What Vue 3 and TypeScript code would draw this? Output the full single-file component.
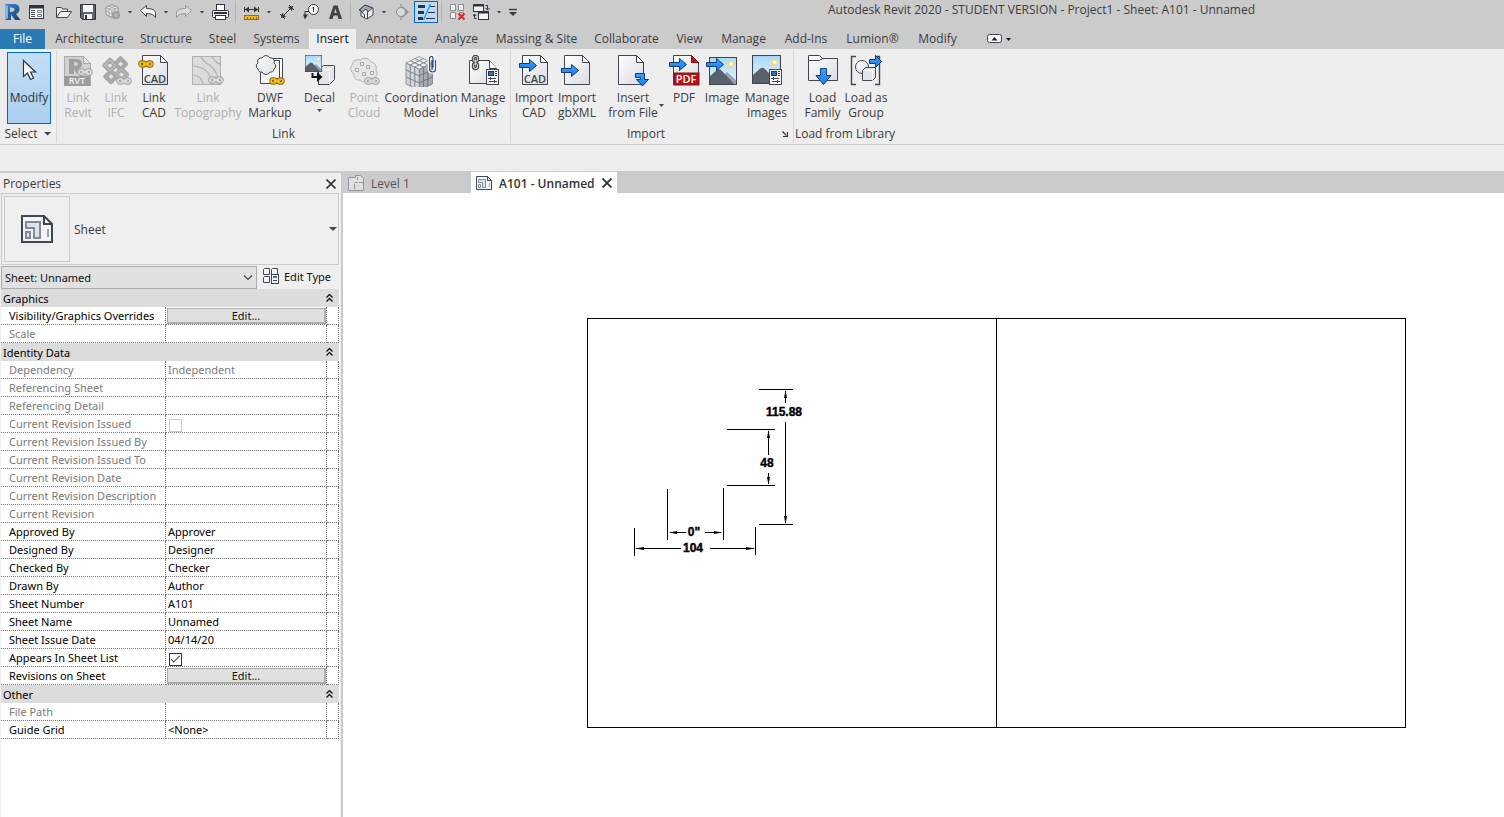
<script setup lang="ts">
import { ref } from 'vue'

/* ---------- shared drawing helpers ---------- */
const INK = '#3f4652'

const chain = (x: number, y: number, fill: string, line: string): string =>
  `<g fill="none"><g stroke="${line}" stroke-width="3.4"><rect x="${x + 2}" y="${y + 2}" width="5" height="4" rx="2"/><rect x="${x + 9}" y="${y + 2}" width="5" height="4" rx="2"/><path d="M${x + 5} ${y + 4}h6"/></g>` +
  `<g stroke="${fill}" stroke-width="1.6"><rect x="${x + 2}" y="${y + 2}" width="5" height="4" rx="2"/><rect x="${x + 9}" y="${y + 2}" width="5" height="4" rx="2"/><path d="M${x + 5} ${y + 4}h6"/></g></g>`
const gold = (x: number, y: number) => chain(x, y, '#fcc21b', '#8a5f08')
const dim = (x: number, y: number) => chain(x, y, '#dedede', '#a2a2a2')

const paper = (x: number): string =>
  `<path d="M${x}.5 .5h18l7 7v22h-25z" fill="url(#paper)" stroke="${INK}"/><path d="M${x + 18}.5 .5v7h7z" fill="#fff" stroke="${INK}" stroke-linejoin="round"/>`
const arrowRight = (x: number, y: number): string =>
  `<path d="M${x}.5 ${y + 4}.5h10v-4l7 6-7 6v-4h-10z" fill="url(#blue)" stroke="#0d3c78"/>`
const panelDoc = (x: number, y: number): string =>
  `<rect x="${x}.5" y="${y}.5" width="12" height="15" fill="#f4f4f4" stroke="${INK}"/><rect x="${x + 2}.5" y="${y + 2}.5" width="5" height="4" fill="#3b6fb2" stroke="#26384f"/><path d="M${x + 9} ${y + 2}.5h2M${x + 9} ${y + 4}.5h2M${x + 9} ${y + 6}.5h2M${x + 2} ${y + 9}.5h8M${x + 3} ${y + 12}.5h8" stroke="${INK}" fill="none"/><path d="M${x + 4}.5 ${y + 8}v3M${x + 8}.5 ${y + 11}v3" stroke="${INK}"/>`
const photo = (x: number, y: number, s: number): string =>
  `<svg x="${x}" y="${y}" width="${s}" height="${s}" viewBox="0 0 28 28"><rect x=".5" y=".5" width="27" height="27" fill="url(#sky)"/><path d="M13 20l5-5 10 9v4H10z" fill="#9aa1ab"/><path d="M0 20l8-7q3-2 5 1l13 14H0z" fill="#59616d"/><circle cx="22" cy="7" r="2.6" fill="#fff" stroke="#f5d878" stroke-width="1.6"/><rect x=".5" y=".5" width="27" height="27" fill="none" stroke="${INK}"/></svg>`
const word = (x: number, y: number, size: number, fill: string, t: string): string =>
  `<text x="${x}" y="${y}" font-size="${size}" fill="${fill}" text-anchor="middle" font-weight="600" font-family="Open Sans, Noto Sans, sans-serif">${t}</text>`

const cubes = ((): string => {
  let out = ''
  for (let r = 0; r < 3; r++)
    for (let c = 0; c < 3; c++) {
      const lx = 1 + c * 4.4
      const ly = 8 + r * 7 + c * 2
      out += `<path d="M${lx} ${ly}l4.4 2v7l-4.400-2z" fill="#d3d6da" stroke="#7c828b" stroke-width=".8"/>`
      const rx = 14.2 + c * 4.4
      const ry = 14 + r * 7 - c * 2
      out += `<path d="M${rx} ${ry}l4.400-2v7l-4.400 2z" fill="#a9aeb5" stroke="#6b717b" stroke-width=".8"/>`
    }
  for (let r = 0; r < 3; r++)
    for (let c = 0; c < 3; c++) {
      const tx = 14.2 + (c - r) * 4.4
      const ty = 1.6 + (c + r) * 2.1
      out += `<path d="M${tx} ${ty}l4.400 2.100-4.400 2.100-4.400-2.100z" fill="#f1f2f4" stroke="#7c828b" stroke-width=".8"/>`
    }
  return out
})()

/* ---------- 32px ribbon icons ---------- */
const big: Record<string, string> = {
  cursor: `<path d="M10.500 5.500v16l4-3.500 3 6.500 3-1.500-3-6h5z" fill="#fff" stroke="#2e3440" stroke-width="1.200"/>`,
  revit: `<path d="M2.500 1.500h19l7 7v22h-26z" fill="#d2d2d2" stroke="#aaa"/><path d="M21.500 1.500v7h7z" fill="#eee" stroke="#aaa"/><path d="M7 4h7q6 0 6 5 0 4-4 5l4 5h-5l-3-5v5H7zM12 7v4q4 0 4-2t-4-2z" fill="#9f9f9f"/><rect x="2" y="21" width="26" height="10" fill="#9c9c9c"/>${word(15, 29, 9, '#f2f2f2', 'RVT')}${dim(15, 13)}`,
  ifc: `<g fill="#e6e6e6" stroke="#a9a9a9" stroke-width="4.500" stroke-linejoin="round"><path d="M10 5l5.500 5.500L10 16l-5.500-5.500zM20.500 3.500L26 9l-5.500 5.500L15 9zM11 16l5.500 5.500L11 27l-5.500-5.500zM21.500 14l5.500 5.500-5.500 5.500-5.500-5.500z"/></g><g fill="none" stroke="#c6c6c6" stroke-linejoin="round"><path d="M10 5l5.500 5.500L10 16l-5.500-5.500zM21.500 14l5.500 5.500-5.500 5.500-5.500-5.500z"/></g>${dim(16, 22)}`,
  linkcad: `${paper(4)}${word(17, 28, 11, INK, 'CAD')}${gold(0, 5)}`,
  topo: `<rect x=".5" y="1.500" width="28" height="28" fill="#dcdcdc" stroke="#b0b0b0"/><path d="M1 20q9 1 10 9.500M1 11q17 1 19 18M9 1.500q3 6 9 9 8 6 9 19M20 1.500q2 5 8.500 8" fill="none" stroke="#b0b0b0" stroke-width="1.200"/>${dim(16, 21)}`,
  dwf: `<path d="M10.500 3.500h18v23h-18z" fill="#fff" stroke="${INK}"/><path d="M6.500 5.500h19v23h-19z" fill="#f4f4f4" stroke="${INK}"/><path d="M4 14a3.500 3.500 0 0 1 0-6a3.500 3.500 0 0 1 4-5a4.500 4.500 0 0 1 8 0a3.500 3.500 0 0 1 4 5a3.500 3.500 0 0 1 0 6a3.500 3.500 0 0 1-4 3a4.500 4.500 0 0 1-8 0a3.500 3.500 0 0 1-4-3z" fill="url(#paper)" stroke="${INK}"/>${gold(15, 22)}`,
  decal: `<path d="M14.500 14.500l5-4h11v14l-5 5h-11z" fill="#e3e5e8" stroke="${INK}"/><path d="M15 14.500h10.500v15M25.500 14.500l5-4" fill="none" stroke="#fff"/>${photo(1, 0, 17)}<path d="M8.500 18v4h6" fill="none" stroke="#111" stroke-width="2"/><path d="M13 17v10l5.500-5z" fill="#111"/>`,
  cloud: `<path d="M6 19a6 6 0 0 1-2-9a6 6 0 0 1 8-5a7 7 0 0 1 11 2a6 6 0 0 1 5 8a5 5 0 0 1-2 8a6 6 0 0 1-8 4a6 6 0 0 1-6-2a5 5 0 0 1-6-6z" fill="#e6e6e6" stroke="#b2b2b2"/><g fill="#eee" stroke="#a9a9a9"><path d="M12.500 7.500h3v3h-3zM18.500 10.500h3v3h-3zM7.500 13.500h3v3h-3zM14.500 17.500h3v3h-3zM22.500 16.500h3v3h-3z"/></g>${dim(16, 22)}`,
  coord: `${cubes}<path d="M30 4v10q0 3-3 3t-3-3V5q0-3.500 3-3.500t3 3.500v9" fill="none" stroke="#fff" stroke-width="3"/><path d="M27 5v7q0 1 1 0V4q0-3-2-2.500T24.500 5v9q0 3 3 3t3-3V5" fill="none" stroke="#285289" stroke-width="1.200"/>`,
  mlinks: `<path d="M2.500 5.500h20l7 8v15h-27z" fill="url(#paper)" stroke="${INK}"/><path d="M22.500 5.500v8h7" fill="#fff" stroke="${INK}"/><g fill="none"><g stroke="#444" stroke-width="3.400"><rect x="6.500" y="1.500" width="4" height="5" rx="2"/><rect x="6.500" y="8.500" width="4" height="5" rx="2"/></g><g stroke="#ccc" stroke-width="1.200"><rect x="6.500" y="1.500" width="4" height="5" rx="2"/><rect x="6.500" y="8.500" width="4" height="5" rx="2"/><path d="M8.500 5v5"/></g></g>${panelDoc(19, 14)}`,
  impcad: `${paper(4)}${word(17, 28, 11, INK, 'CAD')}${arrowRight(1, 4)}`,
  gbxml: `${paper(3)}${arrowRight(0, 9)}`,
  insert: `${paper(1)}<path d="M18.500 18.500h9v6h4l-6 6.500-6-6.500h4v-2h-5z" fill="url(#blue)" stroke="#0d3c78"/>`,
  pdf: `${paper(5)}<path d="M23.500 .5v7h7z" fill="#c4161c" stroke="#8e0e13"/><rect x="6" y="18" width="25" height="12" fill="#b51218" stroke="#8e0e13"/>${word(18, 28, 11, '#fff', 'PDF')}${arrowRight(1, 3)}`,
  image: `${photo(3, 2, 28)}${arrowRight(0, 3)}`,
  mimages: `${photo(1, 0, 29)}${panelDoc(18, 14)}`,
  family: `<path d="M1.500 25.500v-25h11l3 3h15v22z" fill="url(#paper)" stroke="${INK}"/><path d="M1.500 5.500h11l3-2" fill="none" stroke="${INK}"/><path d="M13.500 13.500h6v7h4.500l-7.500 9-7.500-9h4.500z" fill="url(#blue)" stroke="#0d3c78"/>`,
  group: `<path d="M6 1.500H1.500v28H6M25 1.500h4.500v28H25" fill="none" stroke="${INK}" stroke-width="1.400"/><circle cx="12" cy="12" r="6.500" fill="url(#paper)" stroke="${INK}"/><path d="M12.500 15.500l3-3h10v10l-3 3h-10z" fill="#e3e5e8" stroke="${INK}"/><path d="M13 15.500h9.500v10M22.500 15.500l3-3" fill="none" stroke="#fff"/><path d="M19.500 4.500h6v-4l6 6-6 6v-4h-6z" fill="url(#blue)" stroke="#0d3c78"/>`,
}

/* ---------- 16px icons ---------- */
const small: Record<string, string> = {
  logo: `<path d="M1 16V0h8.500q6 0 6 5 0 3.500-3.500 5l4.500 6h-5.500L7 10.500V16zM6 3.500V8q4.500 0 4.500-2.500T6 3.500z" fill="url(#logo)"/><path d="M1 16V0l3 2v12z" fill="#7db5e6"/>`,
  panel: `<rect x="1.500" y="1.500" width="14" height="13" fill="#fff" stroke="#2e3440"/><path d="M1 3h15" stroke="#2e3440" stroke-width="3"/><path d="M3 6.500h4M3 8.500h4M3 10.500h4M3 12.500h4" stroke="#4a515c"/><path d="M9.500 6.500h4v2h-4zM9.500 10.500h4v2h-4z" fill="none" stroke="#7b818a"/>`,
  open: `<path d="M.5 13.500v-10h5l1 1.500h5v3" fill="#eee" stroke="${INK}"/><path d="M.5 13.500l4-6h11l-4 6z" fill="#f5f5f5" stroke="${INK}"/>`,
  save: `<path d="M.5 .5h15v15h-13l-2-2z" fill="#5c6470" stroke="#2e3440"/><rect x="3" y="1" width="10" height="7" fill="#f6f6f6"/><rect x="4" y="10" width="8" height="5" fill="#f6f6f6"/><rect x="5" y="11" width="2" height="4" fill="#2e3440"/>`,
  sync: `<path d="M8 .5l6 3v7l-6 3-6-3v-7z" fill="#ececec" stroke="#8b8b8b"/><path d="M2 3.500l6 3 6-3M8 6.500v7M5 2l6 3v7M11 2L5 5v7M2 7l6 3 6-3" fill="none" stroke="#a5a5a5"/><circle cx="12" cy="11" r="4" fill="#9a9a9a"/><path d="M10 10h4M10 12h4" stroke="#c8c8c8"/>`,
  undo: `<path d="M.5 6.500l6-5v3q8 0 9 4v5q-2-4-9-4v3z" fill="#f8f8f8" stroke="${INK}"/>`,
  redo: `<path d="M15.500 6.500l-6-5v3q-8 0-9 4v5q2-4 9-4v3z" fill="#dcdcdc" stroke="#989898"/>`,
  print: `<rect x="4.500" y=".5" width="8" height="6" fill="#fff" stroke="#2e3440"/><rect x=".5" y="6.500" width="16" height="7" rx="1" fill="#e8e8e8" stroke="#2e3440"/><path d="M2 9h13" stroke="#2e3440" stroke-width="2"/><rect x="3.500" y="11.500" width="10" height="4" fill="#fff" stroke="#2e3440"/>`,
  measure: `<path d="M1.500 3v5M15.500 3v5M2 5.500h13" fill="none" stroke="#2e3440"/><path d="M2 5.500l4-3v6zM15 5.500l-4-3v6z" fill="#2e3440"/><rect x="1.500" y="11.500" width="14" height="4" fill="#f5b92c" stroke="#9a6a0c"/><path d="M4.500 13v2M7.500 13v2M10.500 13v2M13.500 13v2" stroke="#9a6a0c"/>`,
  dimension: `<path d="M3 13L13 3M1 10l5 5M10 1l5 5" stroke="#2e3440" fill="none"/><path d="M2 14l1-5 4 4zM14 2l-1 5-4-4z" fill="#2e3440"/>`,
  tag: `<path d="M2 12V7.500h5" fill="none" stroke="#2e3440"/><path d="M0 10.500l2 5 3-5z" fill="#2e3440"/><circle cx="10.500" cy="5.500" r="5" fill="#fff" stroke="#2e3440"/><path d="M9 4.500l1.500-1.500v5" fill="none" stroke="#2e3440"/>`,
  letter: `<path d="M2 15L6.500 1.500h4L15 15h-3.500l-1-3.500h-4l-1 3.500zM7.200 9h2.600L8.500 4.500z" fill="#3f4248"/>`,
  house: `<path d="M1 6l6-5 8 3v7l-6 4-6-3V7z" fill="#eceef0" stroke="${INK}"/><path d="M2 5.500l5-4.500 7.500 3-4.500 4-2-3-4 3.500z" fill="#a3a9b2" stroke="${INK}"/><path d="M9.500 8v7M4.500 9.500l2 1v3" fill="none" stroke="${INK}"/>`,
  section: `<path d="M8 2l7 6-7 6z" fill="#929292"/><circle cx="7" cy="8" r="4.500" fill="#dadada" stroke="#8c8c8c"/><path d="M7 0v3M7 13v3" stroke="#8c8c8c"/>`,
  thin: `<path d="M0 2.500h7M0 8.500h6M0 14.500h5" stroke="#2e3440" stroke-width="3"/><path d="M12 2.500h5M10 8.500h7M8 14.500h9" stroke="#2e3440"/><path d="M12.500 0L5.500 16" stroke="#2b9cf2" stroke-width="1.400"/>`,
  closewin: `<path d="M1.500 .5h5v6h-5zM9.500 .5h5v6h-5zM1.500 8.500h5v6h-5z" fill="#f3f3f3" stroke="#868b94"/><path d="M10.500 8.500h4v3" fill="none" stroke="#868b94"/><path d="M9.500 9.500l6 6M15.500 9.500l-6 6" stroke="#d4282b" stroke-width="2"/>`,
  switchwin: `<rect x=".5" y=".5" width="10" height="7" fill="#f3f3f3" stroke="#2e3440"/><path d="M0 1.500h11" stroke="#2e3440" stroke-width="2"/><rect x="5.500" y="7.500" width="10" height="8" fill="#f3f3f3" stroke="#2e3440"/><path d="M5 8.500h11" stroke="#2e3440" stroke-width="2"/><path d="M12.500 1.500h2v4M12.500 4l2 2 2-2M3.500 14.500h-2v-4M0 12l1.500-2L3 12" fill="none" stroke="#2e3440"/>`,
  custom: `<path d="M4 5.500h8" stroke="#3a3a3a" stroke-width="1.400"/><path d="M4 8h8l-4 4z" fill="#3a3a3a"/>`,
  sheet: `<path d="M.5 1.500h11l4 4v9H.5z" fill="#f2f3f5" stroke="${INK}"/><path d="M11.500 1.500v4h4" fill="none" stroke="${INK}"/><path d="M2.500 4.500h7v8h-3v-5h-4zM2.500 9.500h2v3h-2z" fill="#dfe3e8" stroke="#7f8b9b"/><path d="M13.500 8v4" stroke="#9aa3af"/>`,
  plan: `<path d="M.5 2.500h7v-2h5l3 3v12H.5z" fill="#dfe0e1" stroke="#8e949c"/><path d="M6.500 14V9M6.500 7.500h3M9.500 5V2M11 7.500h4" fill="none" stroke="#8e949c"/>`,
  edittype: `<g fill="#f3f4f6" stroke="${INK}"><path d="M.5 1.500l1-1h5v6h-6zM8.500 1.500l1-1h5v6h-6zM.5 9.500l1-1h5v6h-6z"/><rect x="8.500" y="6.500" width="7" height="9"/></g><path d="M10 9h4" stroke="#3b6fb2" stroke-width="2"/><path d="M10 12.500h4" stroke="${INK}"/>`,
}

/* ---------- data ---------- */
type QuickItem = { kind: 'icon' | 'arrow' | 'sep'; icon?: string; label?: string; cls?: string }
const i = (icon: string, label: string, cls = ''): QuickItem => ({ kind: 'icon', icon, label, cls })
const arrow = (label: string): QuickItem => ({ kind: 'arrow', label })
const sep: QuickItem = { kind: 'sep' }
const quick: QuickItem[] = [
  i('logo', 'Application menu'), i('panel', 'Home', 'spaced'), i('open', 'Open'), i('save', 'Save'),
  i('sync', 'Synchronize'), arrow('Synchronize options'), i('undo', 'Undo'), arrow('Undo list'),
  i('redo', 'Redo'), arrow('Redo list'), i('print', 'Print'), sep, i('measure', 'Measure'),
  arrow('Measure options'), i('dimension', 'Aligned Dimension'), i('tag', 'Tag by Category'), i('letter', 'Text'),
  sep, i('house', 'Default 3D View'), arrow('3D view options'), i('section', 'Section'), i('thin', 'Thin Lines', 'on'),
  sep, i('closewin', 'Close Inactive Views'), i('switchwin', 'Switch Windows'), arrow('Window list'), i('custom', 'Customize', 'narrow'),
]

const tabs = ['File', 'Architecture', 'Structure', 'Steel', 'Systems', 'Insert', 'Annotate', 'Analyze', 'Massing & Site', 'Collaborate', 'View', 'Manage', 'Add-Ins', 'Lumion®', 'Modify']
const activeTab = ref('Insert')

type Tool = { icon: string; lines: string[]; off?: boolean; more?: 'below' | 'side' }
type Panel = { id: string; title: string; tools: Tool[] }
const panels: Panel[] = [
  {
    id: 'link', title: 'Link', tools: [
      { icon: 'revit', lines: ['Link', 'Revit'], off: true },
      { icon: 'ifc', lines: ['Link', 'IFC'], off: true },
      { icon: 'linkcad', lines: ['Link', 'CAD'] },
      { icon: 'topo', lines: ['Link', 'Topography'], off: true },
      { icon: 'dwf', lines: ['DWF', 'Markup'] },
      { icon: 'decal', lines: ['Decal'], more: 'below' },
      { icon: 'cloud', lines: ['Point', 'Cloud'], off: true },
      { icon: 'coord', lines: ['Coordination', 'Model'] },
      { icon: 'mlinks', lines: ['Manage', 'Links'] },
    ],
  },
  {
    id: 'import', title: 'Import', tools: [
      { icon: 'impcad', lines: ['Import', 'CAD'] },
      { icon: 'gbxml', lines: ['Import', 'gbXML'] },
      { icon: 'insert', lines: ['Insert', 'from File'], more: 'side' },
      { icon: 'pdf', lines: ['PDF'] },
      { icon: 'image', lines: ['Image'] },
      { icon: 'mimages', lines: ['Manage', 'Images'] },
    ],
  },
  {
    id: 'load', title: 'Load from Library', tools: [
      { icon: 'family', lines: ['Load', 'Family'] },
      { icon: 'group', lines: ['Load as', 'Group'] },
    ],
  },
]

type Row = { name: string; value?: string; off?: boolean; kind?: 'button' | 'check'; checked?: boolean }
const off = (name: string, value = ''): Row => ({ name, value, off: true })
const on = (name: string, value = ''): Row => ({ name, value })
const groups = ref<{ title: string; open: boolean; rows: Row[] }[]>([
  { title: 'Graphics', open: true, rows: [{ name: 'Visibility/Graphics Overrides', kind: 'button' }, off('Scale')] },
  {
    title: 'Identity Data', open: true, rows: [
      off('Dependency', 'Independent'), off('Referencing Sheet'), off('Referencing Detail'),
      { name: 'Current Revision Issued', kind: 'check', off: true, checked: false },
      off('Current Revision Issued By'), off('Current Revision Issued To'), off('Current Revision Date'),
      off('Current Revision Description'), off('Current Revision'),
      on('Approved By', 'Approver'), on('Designed By', 'Designer'), on('Checked By', 'Checker'), on('Drawn By', 'Author'),
      on('Sheet Number', 'A101'), on('Sheet Name', 'Unnamed'), on('Sheet Issue Date', '04/14/20'),
      { name: 'Appears In Sheet List', kind: 'check', checked: true },
      { name: 'Revisions on Sheet', kind: 'button' },
    ],
  },
  { title: 'Other', open: true, rows: [off('File Path'), on('Guide Grid', '<None>')] },
])
</script>

<template>
  <div class="app">
    <svg class="defs" width="0" height="0" aria-hidden="true">
      <defs>
        <linearGradient id="paper" x1="0" y1="0" x2="1" y2="1"><stop offset="0" stop-color="#fff" /><stop offset="1" stop-color="#d9dce1" /></linearGradient>
        <linearGradient id="blue" x1="0" y1="0" x2="0" y2="1"><stop offset="0" stop-color="#3fa2ff" /><stop offset="1" stop-color="#1a7be8" /></linearGradient>
        <linearGradient id="sky" x1="0" y1="0" x2="0" y2="1"><stop offset="0" stop-color="#a9d9f7" /><stop offset="1" stop-color="#e6f5fd" /></linearGradient>
        <linearGradient id="logo" x1="0" y1="0" x2="1" y2="1"><stop offset="0" stop-color="#3f86cc" /><stop offset="1" stop-color="#123f74" /></linearGradient>
      </defs>
    </svg>

    <header class="titlebar">
      <div class="quick">
        <template v-for="(q, n) in quick" :key="n">
          <span v-if="q.kind === 'sep'" class="qsep"></span>
          <button v-else-if="q.kind === 'arrow'" class="qarrow" :aria-label="q.label"><span class="caret"></span></button>
          <button v-else class="qicon" :class="q.cls" :aria-label="q.label">
            <svg width="17" height="16" viewBox="0 0 17 16" v-html="small[q.icon!]"></svg>
          </button>
        </template>
      </div>
      <div class="title">Autodesk Revit 2020 - STUDENT VERSION - Project1 - Sheet: A101 - Unnamed</div>
    </header>

    <nav class="tabs">
      <button v-for="t in tabs" :key="t" class="tab" :class="{ file: t === 'File', active: t === activeTab }" @click="activeTab = t">{{ t }}</button>
      <button class="tab pill" aria-label="Minimize ribbon">
        <svg width="26" height="10" viewBox="0 0 26 10"><rect x=".5" y=".5" width="14" height="8" rx="2" fill="#f2f2f2" stroke="#3f4652" /><path d="M4.500 6.500h6l-3-3.500z" fill="#222" /><path d="M19 4h5l-2.500 3z" fill="#111" /></svg>
      </button>
    </nav>

    <section class="ribbon">
      <div class="panel select">
        <div class="tools">
          <button class="tool modify">
            <svg width="32" height="32" viewBox="0 0 32 32" v-html="big.cursor"></svg>
            <span>Modify</span>
          </button>
        </div>
        <button class="ptitle">Select <span class="caret wide"></span></button>
      </div>
      <div v-for="p in panels" :key="p.id" class="panel" :class="p.id">
        <div class="tools">
          <button v-for="t in p.tools" :key="t.icon" class="tool" :disabled="t.off">
            <svg width="32" height="32" viewBox="0 0 32 32" v-html="big[t.icon]"></svg>
            <span v-for="l in t.lines" :key="l">{{ l }}</span>
            <span v-if="t.more" class="caret tiny" :class="t.more"></span>
          </button>
        </div>
        <div class="ptitle">{{ p.title }}
          <button v-if="p.id === 'import'" class="launcher" aria-label="Import settings">
            <svg width="6" height="6" viewBox="0 0 6 6"><path d="M.5 .5l4 4M5.500 1v4.500H1" fill="none" stroke="#333" stroke-width="1.200" /></svg>
          </button>
        </div>
      </div>
    </section>
    <div class="options"></div>

    <main class="work">
      <aside class="props">
        <div class="phead">
          <span>Properties</span>
          <button class="close" aria-label="Close Properties"><svg width="10" height="10" viewBox="0 0 10 10"><path d="M.5 .5l9 9M9.500 .5l-9 9" stroke="#333" stroke-width="1.600" /></svg></button>
        </div>
        <button class="typebox">
          <span class="thumb"><svg width="32" height="32" viewBox="0 0 16 16" v-html="small.sheet"></svg></span>
          <span class="tname">Sheet</span>
          <span class="caret wide"></span>
        </button>
        <div class="typerow">
          <span class="selwrap">
            <select aria-label="Instance filter"><option>Sheet: Unnamed</option></select>
            <svg width="10" height="6" viewBox="0 0 10 6"><path d="M1 .5l4 4 4-4" fill="none" stroke="#444" stroke-width="1.100" /></svg>
          </span>
          <button class="edittype"><svg width="16" height="16" viewBox="0 0 16 16" v-html="small.edittype"></svg>Edit Type</button>
        </div>
        <div class="gridwrap">
          <table>
            <colgroup><col class="c1" /><col class="c2" /><col class="c3" /></colgroup>
            <tbody v-for="(g, gi) in groups" :key="g.title">
              <tr class="group">
                <th colspan="3">
                  <div>
                    <span>{{ g.title }}</span>
                    <button :aria-label="'Toggle ' + g.title" @click="g.open = !g.open"><svg width="7" height="8" viewBox="0 0 7 8"><path d="M.5 3.500l3-3 3 3M.5 7.500l3-3 3 3" fill="none" stroke="#111" stroke-width="1.300" /></svg></button>
                  </div>
                </th>
              </tr>
              <template v-if="g.open">
                <tr v-for="(r, ri) in g.rows" :key="r.name" :class="{ off: r.off }">
                  <td class="name"><label v-if="r.kind === 'check'" :for="`f${gi}-${ri}`">{{ r.name }}</label><template v-else>{{ r.name }}</template></td>
                  <td class="val">
                    <button v-if="r.kind === 'button'" class="edit" :aria-label="r.name">Edit...</button>
                    <input v-else-if="r.kind === 'check'" :id="`f${gi}-${ri}`" v-model="r.checked" type="checkbox" :disabled="r.off" />
                    <template v-else>{{ r.value }}</template>
                  </td>
                  <td></td>
                </tr>
              </template>
            </tbody>
          </table>
        </div>
      </aside>

      <section class="docs">
        <div class="doctabs">
          <button class="dtab"><svg width="16" height="16" viewBox="0 0 16 16" v-html="small.plan"></svg>Level 1</button>
          <div class="dtab current">
            <svg width="16" height="16" viewBox="0 0 16 16" v-html="small.sheet"></svg><span>A101 - Unnamed</span>
            <button class="close" aria-label="Close view"><svg width="10" height="10" viewBox="0 0 10 10"><path d="M.5 .5l9 9M9.500 .5l-9 9" stroke="#333" stroke-width="1.800" /></svg></button>
          </div>
        </div>
        <div class="canvas">
          <svg width="1161" height="624" viewBox="0 0 1161 624">
            <g fill="none" stroke="#000" shape-rendering="crispEdges">
              <path d="M244.500 125.500h818v409h-818zM653.500 125.500v409" />
              <path d="M416 196.500h34M416 331.500h34M442.500 198v12M442.500 229v101" />
              <path d="M384 236.500h48M384 292.500h48M425.500 238v24M425.500 280v11" />
              <path d="M324.500 296v51M380.500 295v52M327 339.500h16M362 339.500h16" />
              <path d="M291.500 335v28M412.500 334v28M293 355.500h45M367 355.500h44" />
            </g>
            <path fill="#000" d="M442.500 197l1.500 8h-3zM442.500 331l1.500-8h-3zM425.500 237l1.500 8h-3zM425.500 292l1.500-8h-3zM326 339.500l8-1.500v3zM379 339.500l-8-1.500v3zM292 355.500l9-1.500v3zM412 355.500l-9-1.500v3z" />
            <g class="dims">
              <text x="441" y="223">115.88</text>
              <text x="424" y="274">48</text>
              <text x="351" y="343">0"</text>
              <text x="350" y="359">104</text>
            </g>
          </svg>
        </div>
      </section>
    </main>
  </div>
</template>

<style>
html, body { margin: 0; }
</style>

<style scoped>
.app {
  display: flex; flex-direction: column; height: 100vh; overflow: hidden;
  background: #eee; color: #3c3c3c;
  font: 12px/15px "Open Sans", "Noto Sans", sans-serif;
}
.app *, .app *::before { box-sizing: border-box; }
.defs { position: absolute; }
button { margin: 0; padding: 0; border: 0; background: none; font: inherit; color: inherit; }
svg { display: block; flex: none; }
.caret { display: block; width: 5px; height: 3px; background: #444; clip-path: polygon(0 0, 100% 0, 50% 100%); }
.caret.wide { width: 8px; height: 4px; }
.caret.tiny { width: 5px; height: 3px; }

.titlebar { display: flex; height: 28px; background: #cbcbcb; }
.quick { display: flex; height: 24px; align-items: center; }
.qicon { display: flex; width: 24px; height: 22px; align-items: center; justify-content: center; }
.qicon.spaced { margin-right: 4px; }
.qicon.narrow { width: 16px; }
.qicon.on { background: #bcd9f3; border: 1px solid #0a64c0; }
.qarrow { display: flex; width: 12px; height: 22px; align-items: center; justify-content: center; }
.qsep { width: 1px; height: 22px; margin: 0 3px; background: #b4b4b4; }
.title { flex: 1; padding: 2px 0 0 58px; text-align: center; white-space: nowrap; }

.tabs {
  display: grid; height: 21px; background: #cbcbcb;
  grid-template-columns: 47px 85px 68px 45px 63px 49px 69px 61px 99px 81px 45px 63px 62px 71px 59px 66px;
}
.tab { display: flex; align-items: center; justify-content: center; white-space: nowrap; }
.tab.file { margin: 1px 2px 0 0; padding-bottom: 1px; background: #2a7ab5; color: #fff; }
.tab.active { margin: 1px 1px 0; padding-bottom: 1px; background: #eee; color: #111; }

.ribbon { display: flex; height: 96px; border-bottom: 1px solid #cbcbcb; }
.panel { display: flex; flex-direction: column; margin: 1px 0; border-right: 1px solid #d8d8d8; }
.panel.load { border-right: 0; }
.tools { display: grid; height: 76px; padding: 2px 0 0; }
.select { width: 57px; }
.select .tools { padding-left: 7px; grid-template-columns: 44px; }
.link .tools { padding-left: 2px; grid-template-columns: 38px 38px 38px 70px 54px 45px 44px 70px 54px; }
.import .tools { padding: 2px 2px 0; grid-template-columns: 42px 44px 68px 34px 42px 48px; }
.import .ptitle { padding-right: 12px; }
.load .tools { padding: 2px 8px 0 7px; grid-template-columns: 43px 44px; }
.tool { position: relative; display: flex; flex-direction: column; align-items: center; height: 72px; padding-top: 3px; white-space: nowrap; }
.tool svg { margin-bottom: 3px; }
.tool:disabled { color: #b0b0b0; }
.tool.modify { padding-top: 2px; background: linear-gradient(#c3def5, #aacff0); border: 1px solid #0a64c0; color: #333; }
.tool .below { margin-top: 4px; }
.tool .side { position: absolute; right: 3px; top: 52px; }
.ptitle { position: relative; display: flex; gap: 6px; align-items: center; justify-content: center; height: 15px; white-space: nowrap; }
.launcher { position: absolute; right: 5px; top: 5px; }
.options { height: 26px; }

.work { display: flex; flex: 1; min-height: 0; border-top: 1px solid #cbcbcb; }
.props { display: flex; flex-direction: column; width: 343px; padding: 1px 2px 0 1px; border-right: 2px solid #cbcbcb; background: #efefef; box-shadow: inset 0 1px #cbcbcb; }
.phead { display: flex; align-items: center; justify-content: space-between; height: 20px; padding: 1px 2px 0; }
.phead .close { margin-right: 1px; }
.typebox { display: flex; align-items: center; width: 338px; height: 72px; padding: 2px 1px 2px 2px; border: 1px solid #cbcbcb; text-align: left; }
.thumb { display: flex; width: 66px; height: 66px; align-items: center; justify-content: center; border: 1px solid #cbcbcb; }
.tname { flex: 1; padding-left: 4px; }
.typerow { display: flex; height: 24px; padding-top: 1px; color: #111; }
.selwrap { position: relative; width: 256px; height: 23px; }
.selwrap select { width: 100%; height: 100%; padding: 0 20px 0 3px; border: 1px solid #adadad; border-radius: 0; background: #e1e1e1; color: #111; font-family: "Noto Sans", "Open Sans", sans-serif; font-size: 11px; appearance: none; }
.selwrap svg { position: absolute; right: 4px; top: 9px; }
.edittype { display: flex; gap: 5px; align-items: center; height: 20px; margin-left: 6px; white-space: nowrap; font-family: "Noto Sans", "Open Sans", sans-serif; font-size: 11px; }
.gridwrap { flex: 1; background: #fff; margin-right: -1px; }
table { width: 338px; table-layout: fixed; border-collapse: separate; border-spacing: 0; color: #000; font-family: "Noto Sans", "Open Sans", sans-serif; font-size: 11px; }
.c1 { width: 165px; }
.c2 { width: 161px; }
.c3 { width: 12px; }
th { height: 18px; padding: 0; background: #dcdcdc; font-weight: 400; }
th div { display: flex; height: 18px; align-items: center; justify-content: space-between; padding: 0 6px 0 2px; }
td { height: 18px; padding: 0; line-height: 15px; border-right: 1px dotted #777; border-bottom: 1px dotted #777; white-space: nowrap; overflow: hidden; }
.name { padding-left: 8px; }
.val { padding-left: 2px; }
.off td { color: #7b7b7b; }
.edit { display: block; width: 159px; height: 16px; margin: 1px 0 0 -1px; border: 1px solid #adadad; border-width: 1px 2px 2px 1px; background: #e1e1e1; color: #111; line-height: 13px; }
input[type="checkbox"] { display: grid; place-content: center; width: 13px; height: 13px; margin: 3px 0 0 1px; border: 1px solid #333; background: #fff; appearance: none; }
input[type="checkbox"]:disabled { border-color: #ccc; }
input[type="checkbox"]:checked::before { content: ""; width: 9px; height: 4px; border: solid #333; border-width: 0 0 1px 1px; transform: translateY(-1px) rotate(-45deg); }

.docs { display: flex; flex: 1; flex-direction: column; min-width: 0; background: #fff; }
.doctabs { display: flex; height: 21px; background: #cbcbcb; }
.dtab { display: flex; gap: 7px; align-items: center; width: 128px; padding: 1px 0 0 5px; color: #555; }
.dtab.current { width: 146px; background: #fff; color: #333; font-weight: 600; white-space: nowrap; }
.canvas { flex: 1; min-height: 0; overflow: hidden; }
.dims text { font: 700 12px "Liberation Sans", Arial, sans-serif; text-anchor: middle; stroke: #000; stroke-width: .4px; }
</style>
